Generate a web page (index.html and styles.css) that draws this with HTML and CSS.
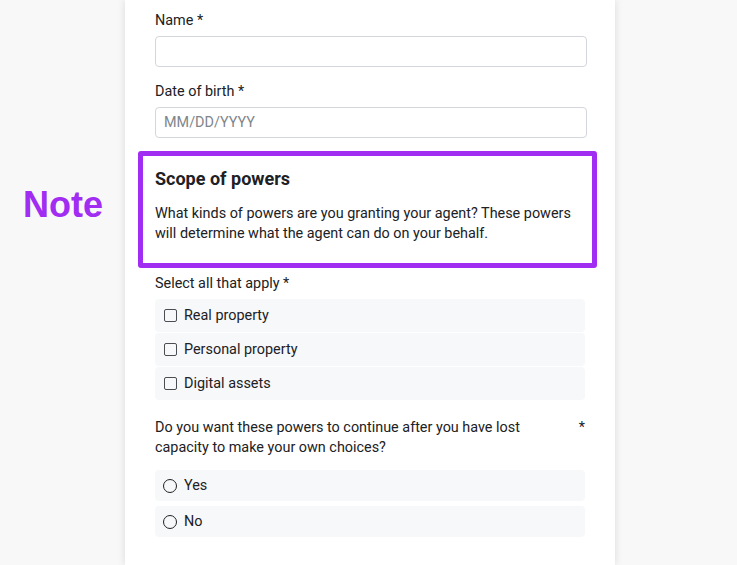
FILE: index.html
```html
<!DOCTYPE html>
<html lang="en">
<head>
    <meta charset="UTF-8">
    <meta name="viewport" content="width=device-width, initial-scale=1.0">
    <title>Power of attorney</title>
    <link rel="stylesheet" href="styles.css">
</head>
<body>
    <!-- Annotation label -->
    <div class="note-label">Note</div>

    <div class="form-card">
        <div class="field">
            <label class="field-label" for="name">Name *</label>
            <input type="text" id="name" class="text-input">
        </div>

        <div class="field">
            <label class="field-label" for="dob">Date of birth *</label>
            <input type="text" id="dob" class="text-input" placeholder="MM/DD/YYYY">
        </div>

        <!-- Highlighted section -->
        <div class="note-box">
            <h2 class="section-title">Scope of powers</h2>
            <p class="section-text">What kinds of powers are you granting your agent? These powers will determine what the agent can do on your behalf.</p>
        </div>

        <div class="field">
            <div class="field-label">Select all that apply *</div>
            <div class="option-list">
                <label class="option"><span class="checkbox"></span>Real property</label>
                <label class="option"><span class="checkbox"></span>Personal property</label>
                <label class="option"><span class="checkbox"></span>Digital assets</label>
            </div>
        </div>

        <div class="field question">
            <div class="question-label">
                <span>Do you want these powers to continue after you have lost capacity to make your own choices?</span>
                <span class="required">*</span>
            </div>
            <label class="option radio-option"><span class="radio"></span>Yes</label>
            <label class="option radio-option"><span class="radio"></span>No</label>
        </div>
    </div>
</body>
</html>
```

FILE: styles.css
```css
body {
    font-family: Roboto, "Noto Sans", sans-serif;
    margin: 0;
    padding: 0;
    background-color: #f8f8f8;
    color: #202124;
    font-size: 14.4px;
    position: relative;
    min-height: 100vh;
}

/* Annotation label */
.note-label {
    position: absolute;
    left: 23px;
    top: 184px;
    font-family: "Liberation Sans", Arial, sans-serif;
    font-size: 36px;
    font-weight: bold;
    color: #a12cf2;
}

.form-card {
    width: 430px;
    margin-left: 125px;
    height: 544px;
    padding: 11px 30px 10px 30px;
    background-color: #fff;
    box-shadow: 0 0 8px rgba(0, 0, 0, 0.12);
    overflow: hidden;
}

.field {
    margin-bottom: 15px;
}

.field-label {
    display: block;
    line-height: 20px;
    margin-bottom: 5px;
}

.text-input {
    display: block;
    width: 432px;
    height: 31px;
    box-sizing: border-box;
    border: 1px solid #d3d6da;
    border-radius: 4px;
    padding: 0 8px;
    font-family: inherit;
    font-size: 14.4px;
    color: #202124;
}

.text-input::placeholder {
    color: #80868b;
}

/* Highlighted section */
.note-box {
    margin: -2px -12px 6px -17px;
    padding: 11px 7px 19px 12px;
    border: 5px solid #a12cf2;
    border-radius: 3px;
}

.section-title {
    margin: 0 0 13px 0;
    font-size: 18px;
    font-weight: 700;
    line-height: 24px;
}

.section-text {
    margin: 0;
    line-height: 20px;
}

.option-list {
    display: flex;
    flex-direction: column;
    gap: 1px;
    margin-top: 0;
}

.option {
    display: flex;
    align-items: center;
    height: 33px;
    padding-left: 9px;
    background-color: #f7f8fa;
    border-radius: 4px;
}

.checkbox {
    width: 13px;
    height: 13px;
    box-sizing: border-box;
    border: 1.6px solid #4a4d51;
    border-radius: 2px;
    margin-right: 7px;
}

.question {
    margin-top: 18px;
}

.question-label {
    display: flex;
    justify-content: space-between;
    line-height: 20px;
    margin-bottom: 12px;
}

.question-label span:first-child {
    max-width: 380px;
}

.required {
    padding-right: 0;
}

.radio-option {
    height: 31px;
    margin-bottom: 5px;
    padding-left: 8px;
}

.radio {
    width: 14px;
    height: 14px;
    box-sizing: border-box;
    border: 1.6px solid #202124;
    border-radius: 50%;
    margin-right: 7px;
}
```
